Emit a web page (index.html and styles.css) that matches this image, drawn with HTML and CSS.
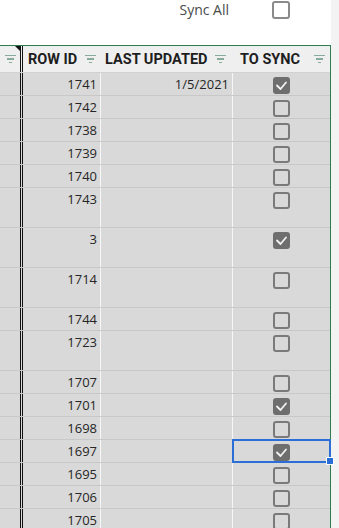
FILE: index.html
```html
<!DOCTYPE html>
<html>
<head>
<meta charset="utf-8">
<link rel="stylesheet" href="styles.css">
</head>
<body>
<div class="page">
  <div class="main">
    <div class="topbar">
      <span class="sync-label">Sync All</span>
      <span class="cb cb-top"></span>
    </div>
    <div class="table">
      <div class="hrow">
        <div class="hc c1"><span class="filt"><i></i><i></i><i></i></span><span class="tri"></span></div>
        <div class="hc c2"><span>ROW ID</span><span class="filt"><i></i><i></i><i></i></span></div>
        <div class="hc c3"><span>LAST UPDATED</span><span class="filt"><i></i><i></i><i></i></span></div>
        <div class="hc c4"><span>TO SYNC</span><span class="filt"><i></i><i></i><i></i></span></div>
      </div>
      <div class="row"><div class="c c1"></div><div class="c c2">1741</div><div class="c c3">1/5/2021</div><div class="c c4"><span class="cb on"><svg viewBox="0 0 17 17"><polyline points="4,8.5 7.5,12 13,5.5"/></svg></span></div></div>
      <div class="row"><div class="c c1"></div><div class="c c2">1742</div><div class="c c3"></div><div class="c c4"><span class="cb"></span></div></div>
      <div class="row"><div class="c c1"></div><div class="c c2">1738</div><div class="c c3"></div><div class="c c4"><span class="cb"></span></div></div>
      <div class="row"><div class="c c1"></div><div class="c c2">1739</div><div class="c c3"></div><div class="c c4"><span class="cb"></span></div></div>
      <div class="row"><div class="c c1"></div><div class="c c2">1740</div><div class="c c3"></div><div class="c c4"><span class="cb"></span></div></div>
      <div class="row tall"><div class="c c1"></div><div class="c c2">1743</div><div class="c c3"></div><div class="c c4"><span class="cb"></span></div></div>
      <div class="row tall"><div class="c c1"></div><div class="c c2">3</div><div class="c c3"></div><div class="c c4"><span class="cb on"><svg viewBox="0 0 17 17"><polyline points="4,8.5 7.5,12 13,5.5"/></svg></span></div></div>
      <div class="row tall"><div class="c c1"></div><div class="c c2">1714</div><div class="c c3"></div><div class="c c4"><span class="cb"></span></div></div>
      <div class="row"><div class="c c1"></div><div class="c c2">1744</div><div class="c c3"></div><div class="c c4"><span class="cb"></span></div></div>
      <div class="row tall"><div class="c c1"></div><div class="c c2">1723</div><div class="c c3"></div><div class="c c4"><span class="cb"></span></div></div>
      <div class="row"><div class="c c1"></div><div class="c c2">1707</div><div class="c c3"></div><div class="c c4"><span class="cb"></span></div></div>
      <div class="row"><div class="c c1"></div><div class="c c2">1701</div><div class="c c3"></div><div class="c c4"><span class="cb on"><svg viewBox="0 0 17 17"><polyline points="4,8.5 7.5,12 13,5.5"/></svg></span></div></div>
      <div class="row"><div class="c c1"></div><div class="c c2">1698</div><div class="c c3"></div><div class="c c4"><span class="cb"></span></div></div>
      <div class="row"><div class="c c1"></div><div class="c c2">1697</div><div class="c c3"></div><div class="c c4 selected"><span class="cb on"><svg viewBox="0 0 17 17"><polyline points="4,8.5 7.5,12 13,5.5"/></svg></span><span class="sel"></span><span class="handle"></span></div></div>
      <div class="row"><div class="c c1"></div><div class="c c2">1695</div><div class="c c3"></div><div class="c c4"><span class="cb"></span></div></div>
      <div class="row"><div class="c c1"></div><div class="c c2">1706</div><div class="c c3"></div><div class="c c4"><span class="cb"></span></div></div>
      <div class="row"><div class="c c1"></div><div class="c c2">1705</div><div class="c c3"></div><div class="c c4"><span class="cb"></span></div></div>
    </div>
  </div>
  <div class="strip"></div>
</div>
</body>
</html>
```
FILE: styles.css
```css
* { box-sizing: border-box; }
html, body { margin: 0; padding: 0; background: #ffffff; }
body { width: 339px; height: 528px; overflow: hidden; font-family: "Open Sans", "Liberation Sans", sans-serif; }
.page { display: flex; width: 339px; height: 528px; }
.main { width: 331px; flex: none; }
.strip { flex: 1; background: #f3f3f3; }

.topbar { height: 45px; display: flex; justify-content: flex-end; align-items: flex-start; padding: 1px 41px 0 0; gap: 43px; }
.sync-label { font-size: 14px; color: #4a4a4a; line-height: 19px; margin-top: -1px; }

.cb { display: block; width: 17px; height: 17px; border: 2px solid #7a7a7a; border-radius: 3px; background: transparent; }
.cb-top { border-color: #8a8a8a; width: 18px; height: 18px; }
.cb.on { background: #6e6e6e; border-color: #6e6e6e; position: relative; }
.cb.on svg { position: absolute; left: -2px; top: -2px; width: 17px; height: 17px; }
.cb.on polyline { fill: none; stroke: #f2f2f2; stroke-width: 1.8; stroke-linecap: round; stroke-linejoin: round; }

.table { border-top: 1px solid #2e7d4f; border-right: 1px solid #2e7d4f; }
.hrow, .row { display: grid; grid-template-columns: 20px 80px 132px 98px; }
.hrow { height: 27px; background: #efefef; border-bottom: 1px solid #d2d2d2; }
.hc { display: flex; align-items: center; justify-content: space-between; font-family: Roboto, "Liberation Sans", sans-serif; font-weight: 700; font-size: 14.5px; color: #1e1e1e; padding: 0 4px 0 5px; white-space: nowrap; position: relative; }
.hc.c1 { justify-content: center; padding: 0 0 0 1px; }
.hc.c2 { border-left: 3px double #111; }
.hc.c3 { padding-right: 6px; }
.hc.c4 { padding: 0 5px 0 8px; }

.filt { display: flex; flex-direction: column; align-items: center; gap: 2px; width: 11px; }
.filt i { display: block; height: 1.3px; background: #86ab9a; }
.filt i:nth-child(1) { width: 11px; }
.filt i:nth-child(2) { width: 7px; }
.filt i:nth-child(3) { width: 3px; }

.tri { position: absolute; right: 0; top: 0; width: 0; height: 0; border-top: 5px solid #111; border-left: 5px solid transparent; }

.row { height: 23px; background: #d9d9d9; border-bottom: 1px solid #c8c8c8; }
.row.tall { height: 40px; }
.c { font-size: 13px; color: #262626; line-height: 22px; white-space: nowrap; }
.c.c2 { border-left: 3px double #111; text-align: right; padding-right: 3px; }
.c.c3 { border-left: 1px solid #f7f7f7; text-align: right; padding-right: 3px; }
.c.c4 { border-left: 1px solid #f7f7f7; display: flex; justify-content: center; padding-top: 4px; position: relative; }

.sel { position: absolute; left: -1px; top: -1px; right: -1px; bottom: -1px; border: 2px solid #2b6fd6; pointer-events: none; }
.handle { position: absolute; right: -4px; bottom: -3px; width: 6px; height: 6px; background: #2b6fd6; border: 1px solid #ffffff; box-sizing: content-box; }
```
